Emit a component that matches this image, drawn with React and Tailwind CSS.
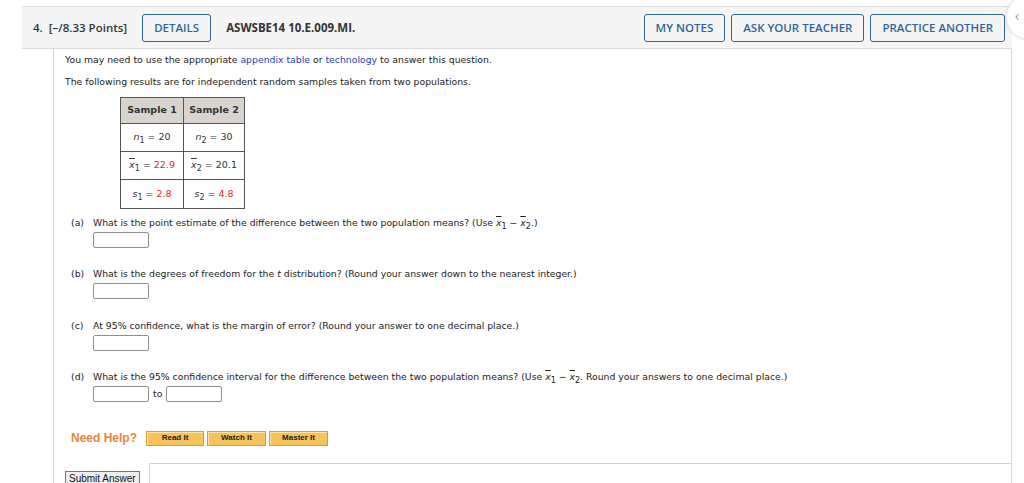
import { ChevronLeft } from "lucide-react";

const body = { fontFamily: '"DejaVu Sans", Verdana, sans-serif' };

function Sub({ children }) {
  return <sub className="text-[8px] relative top-[3px]">{children}</sub>;
}

function XBar({ n }) {
  return (
    <span>
      <span className="italic" style={{ textDecoration: "overline" }}>x</span>
      <Sub>{n}</Sub>
    </span>
  );
}

function Box() {
  return <div className="w-[56px] h-[16px] border border-[#8f8f8f] rounded-[2px] bg-white" />;
}

function HelpBtn({ label, w }) {
  return (
    <div className={`${w} h-[15px] bg-[#f6c25a] border border-[#d99a3a] shadow-[inset_1px_1px_0_#fde3a8] flex items-center justify-center text-[8px] font-bold text-[#222]`} style={{ fontFamily: '"Liberation Sans", Arial, sans-serif' }}>
      {label}
    </div>
  );
}

function Part({ tag, children }) {
  return (
    <div className="flex text-[9.3px] text-[#222] leading-[14px]">
      <span className="w-[22px]">({tag})</span>
      <span>{children}</span>
    </div>
  );
}

const btn = "h-[28px] px-[11px] border-[1.5px] border-[#2e6699] rounded-[3px] flex items-center text-[11.5px] font-semibold text-[#2e6699]";

export default function App() {
  return (
    <div className="bg-white w-[1024px] h-[483px] overflow-hidden pt-[6px] relative">
      <div className="ml-[22px] w-[990px]">
        <div className="h-[43px] bg-[#f5f5f5] border-t border-b border-[#dcdcdc] flex items-center pl-[11px] pr-[7px]" style={{ fontFamily: '"Open Sans", sans-serif' }}>
          <span className="text-[11.5px] font-semibold text-[#333]">4.&nbsp; [–/8.33 Points]</span>
          <div className={`ml-[15px] ${btn}`}>DETAILS</div>
          <span className="ml-[15px] text-[11.5px] font-bold text-[#333]">ASWSBE14 10.E.009.MI.</span>
          <div className="ml-auto flex gap-[6px]">
            {["MY NOTES", "ASK YOUR TEACHER", "PRACTICE ANOTHER"].map((t) => (
              <div key={t} className={btn}>{t}</div>
            ))}
          </div>
        </div>
        <div className="ml-[31px] border-l border-r border-[#d4d4d4] h-[440px] pl-[11px] pt-[4px]" style={body}>
          <p className="text-[9.3px] text-[#222] leading-[14px]">
            You may need to use the appropriate <span className="text-[#1d3ec7]">appendix table</span> or <span className="text-[#1d3ec7]">technology</span> to answer this question.
          </p>
          <p className="text-[9.3px] text-[#222] leading-[14px] mt-[8px]">The following results are for independent random samples taken from two populations.</p>
          <table className="ml-[55px] mt-[8px] border-collapse text-[9.5px] text-[#333]">
            <thead>
              <tr className="bg-[#d8d4cd] h-[26px]">
                <th className="border border-[#555] w-[63px] font-bold">Sample 1</th>
                <th className="border border-[#555] w-[61px] font-bold">Sample 2</th>
              </tr>
            </thead>
            <tbody className="text-center">
              <tr className="h-[28px]">
                <td className="border border-[#555]"><span className="italic">n</span><Sub>1</Sub> = 20</td>
                <td className="border border-[#555]"><span className="italic">n</span><Sub>2</Sub> = 30</td>
              </tr>
              <tr className="h-[28px]">
                <td className="border border-[#555]"><XBar n="1" /> = <span className="text-[#e8261c]">22.9</span></td>
                <td className="border border-[#555]"><XBar n="2" /> = 20.1</td>
              </tr>
              <tr className="h-[29px]">
                <td className="border border-[#555]"><span className="italic">s</span><Sub>1</Sub> = <span className="text-[#e8261c]">2.8</span></td>
                <td className="border border-[#555]"><span className="italic">s</span><Sub>2</Sub> = <span className="text-[#e8261c]">4.8</span></td>
              </tr>
            </tbody>
          </table>

          <div className="ml-[6px] mt-[7px]">
            <Part tag="a">What is the point estimate of the difference between the two population means? (Use <XBar n="1" /> − <XBar n="2" />.)</Part>
            <div className="ml-[22px] mt-[2px]"><Box /></div>

            <div className="mt-[19px]">
              <Part tag="b">What is the degrees of freedom for the <span className="italic">t</span> distribution? (Round your answer down to the nearest integer.)</Part>
            </div>
            <div className="ml-[22px] mt-[2px]"><Box /></div>

            <div className="mt-[20px]">
              <Part tag="c">At 95% confidence, what is the margin of error? (Round your answer to one decimal place.)</Part>
            </div>
            <div className="ml-[22px] mt-[2px]"><Box /></div>

            <div className="mt-[19px]">
              <Part tag="d">What is the 95% confidence interval for the difference between the two population means? (Use <XBar n="1" /> − <XBar n="2" />. Round your answers to one decimal place.)</Part>
            </div>
            <div className="ml-[22px] mt-[2px] flex items-center gap-[4px] text-[9.3px] text-[#222]">
              <Box />
              <span>to</span>
              <Box />
            </div>

            <div className="mt-[27px] flex items-center" style={{ fontFamily: '"Liberation Sans", Arial, sans-serif' }}>
              <span className="text-[12px] font-bold text-[#e8873a] mr-[9px]">Need Help?</span>
              <div className="flex gap-[3px]">
                <HelpBtn label="Read It" w="w-[58px]" />
                <HelpBtn label="Watch It" w="w-[59px]" />
                <HelpBtn label="Master It" w="w-[59px]" />
              </div>
            </div>
          </div>

          <div className="mt-[16px] flex items-start">
            <div className="mt-[8px] px-[3px] h-[18px] border border-[#767676] bg-[#efefef] text-[10px] text-[#111] leading-[14px]" style={{ fontFamily: '"Liberation Sans", Arial, sans-serif' }}>Submit Answer</div>
            <div className="ml-[9px] flex-1 h-[40px] border border-[#d4d4d4] mr-[-1px]" />
          </div>
        </div>
      </div>
      <div className="absolute left-[1006px] top-[-6px] w-[46px] h-[46px] rounded-full bg-white border border-[#e6e6e6] shadow-[0_0_3px_rgba(0,0,0,0.12)] flex items-center pl-[5px]">
        <ChevronLeft className="w-[10px] h-[10px] text-[#666]" strokeWidth={2} />
      </div>
    </div>
  );
}
